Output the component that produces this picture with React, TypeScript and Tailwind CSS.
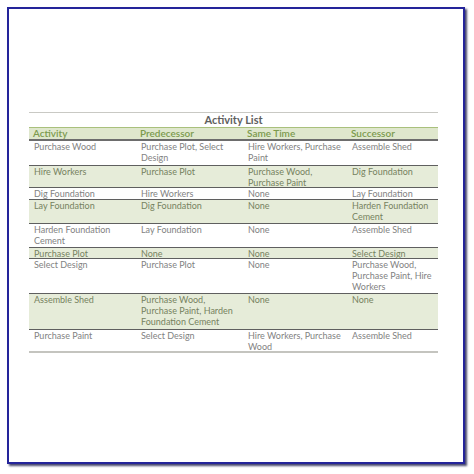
type Row = {
  cells: string[][];
  shaded: boolean;
  height: string;
};

const rows: Row[] = [
  {
    cells: [['Purchase Wood'], ['Purchase Plot, Select', 'Design'], ['Hire Workers, Purchase', 'Paint'], ['Assemble Shed']],
    shaded: false,
    height: 'h-[25px]',
  },
  {
    cells: [['Hire Workers'], ['Purchase Plot'], ['Purchase Wood,', 'Purchase Paint'], ['Dig Foundation']],
    shaded: true,
    height: 'h-[22px]',
  },
  {
    cells: [['Dig Foundation'], ['Hire Workers'], ['None'], ['Lay Foundation']],
    shaded: false,
    height: 'h-[12px]',
  },
  {
    cells: [['Lay Foundation'], ['Dig Foundation'], ['None'], ['Harden Foundation', 'Cement']],
    shaded: true,
    height: 'h-[24px]',
  },
  {
    cells: [['Harden Foundation', 'Cement'], ['Lay Foundation'], ['None'], ['Assemble Shed']],
    shaded: false,
    height: 'h-[24px]',
  },
  {
    cells: [['Purchase Plot'], ['None'], ['None'], ['Select Design']],
    shaded: true,
    height: 'h-[11px]',
  },
  {
    cells: [['Select Design'], ['Purchase Plot'], ['None'], ['Purchase Wood,', 'Purchase Paint, Hire', 'Workers']],
    shaded: false,
    height: 'h-[35px]',
  },
  {
    cells: [['Assemble Shed'], ['Purchase Wood,', 'Purchase Paint, Harden', 'Foundation Cement'], ['None'], ['None']],
    shaded: true,
    height: 'h-[36px]',
  },
  {
    cells: [['Purchase Paint'], ['Select Design'], ['Hire Workers, Purchase', 'Wood'], ['Assemble Shed']],
    shaded: false,
    height: 'h-[23px]',
  },
];

const headers = ['Activity', 'Predecessor', 'Same Time', 'Successor'];

// ─── Table row ───────────────────────────────────────────────────────────────

function TableRow({ row, last }: { row: Row; last: boolean }) {
  return (
    <div
      className={`grid grid-cols-[107px_107px_104px_91px] ${row.height} ${
        row.shaded ? 'bg-[#e6ecd9] text-[#76825f]' : 'bg-white text-[#828282]'
      } ${last ? 'border-b-2 border-[#c4c4bf]' : 'border-b-[1.5px] border-[#5f5f5f]'}`}
    >
      {row.cells.map((lines, i) => (
        <div key={i} className="pl-[5px] leading-[11px] whitespace-nowrap">
          {lines.map((l) => (
            <div key={l}>{l}</div>
          ))}
        </div>
      ))}
    </div>
  );
}

// ─── App ─────────────────────────────────────────────────────────────────────

export default function App() {
  return (
    <div className="w-[474px] h-[474px] bg-white pt-[7px] pl-[7px]">
      <div className="w-[458px] h-[457px] border-2 border-[#24249a] shadow-[2px_2px_2px_rgba(10,10,60,0.75)] bg-white">
        <div
          className="ml-[20px] mt-[103px] w-[409px] text-[9px]"
          style={{ fontFamily: 'Lato, "Open Sans", sans-serif' }}
        >
          {/* Title */}
          <div className="border-t border-[#c9c9c4] h-[15px] flex items-center justify-center text-[11px] font-bold text-[#5e5e5e]">
            Activity List
          </div>

          {/* Header */}
          <div className="grid grid-cols-[107px_107px_104px_91px] h-[14px] bg-[#dfe7cd] border-t-[1.5px] border-[#a9c07c] border-b-2 border-b-[#6d6d6d] text-[10px] font-semibold text-[#7c9a4d] leading-[11px]">
            {headers.map((h) => (
              <div key={h} className="pl-[4px] whitespace-nowrap">
                {h}
              </div>
            ))}
          </div>

          {rows.map((r, i) => (
            <TableRow key={i} row={r} last={i === rows.length - 1} />
          ))}
        </div>
      </div>
    </div>
  );
}
